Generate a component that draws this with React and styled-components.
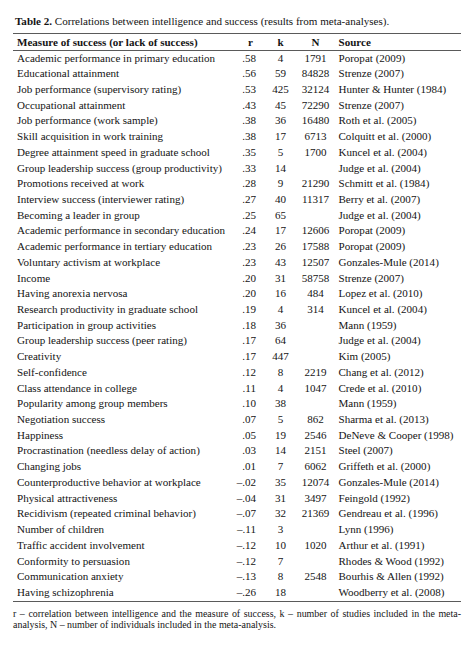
import React from "react";
import styled, { createGlobalStyle } from "styled-components";

const Global = createGlobalStyle`
  html, body { margin: 0; padding: 0; background: #fff; }
  body { font-family: "Liberation Serif", "Times New Roman", serif; color: #141414; }
`;

const rows = [
  ["Academic performance in primary education", ".58", "4", "1791", "Poropat (2009)"],
  ["Educational attainment", ".56", "59", "84828", "Strenze (2007)"],
  ["Job performance (supervisory rating)", ".53", "425", "32124", "Hunter & Hunter (1984)"],
  ["Occupational attainment", ".43", "45", "72290", "Strenze (2007)"],
  ["Job performance (work sample)", ".38", "36", "16480", "Roth et al. (2005)"],
  ["Skill acquisition in work training", ".38", "17", "6713", "Colquitt et al. (2000)"],
  ["Degree attainment speed in graduate school", ".35", "5", "1700", "Kuncel et al. (2004)"],
  ["Group leadership success (group productivity)", ".33", "14", "", "Judge et al. (2004)"],
  ["Promotions received at work", ".28", "9", "21290", "Schmitt et al. (1984)"],
  ["Interview success (interviewer rating)", ".27", "40", "11317", "Berry et al. (2007)"],
  ["Becoming a leader in group", ".25", "65", "", "Judge et al. (2004)"],
  ["Academic performance in secondary education", ".24", "17", "12606", "Poropat (2009)"],
  ["Academic performance in tertiary education", ".23", "26", "17588", "Poropat (2009)"],
  ["Voluntary activism at workplace", ".23", "43", "12507", "Gonzales-Mule (2014)"],
  ["Income", ".20", "31", "58758", "Strenze (2007)"],
  ["Having anorexia nervosa", ".20", "16", "484", "Lopez et al. (2010)"],
  ["Research productivity in graduate school", ".19", "4", "314", "Kuncel et al. (2004)"],
  ["Participation in group activities", ".18", "36", "", "Mann (1959)"],
  ["Group leadership success (peer rating)", ".17", "64", "", "Judge et al. (2004)"],
  ["Creativity", ".17", "447", "", "Kim (2005)"],
  ["Self-confidence", ".12", "8", "2219", "Chang et al. (2012)"],
  ["Class attendance in college", ".11", "4", "1047", "Crede et al. (2010)"],
  ["Popularity among group members", ".10", "38", "", "Mann (1959)"],
  ["Negotiation success", ".07", "5", "862", "Sharma et al. (2013)"],
  ["Happiness", ".05", "19", "2546", "DeNeve & Cooper (1998)"],
  ["Procrastination (needless delay of action)", ".03", "14", "2151", "Steel (2007)"],
  ["Changing jobs", ".01", "7", "6062", "Griffeth et al. (2000)"],
  ["Counterproductive behavior at workplace", "\u2013.02", "35", "12074", "Gonzales-Mule (2014)"],
  ["Physical attractiveness", "\u2013.04", "31", "3497", "Feingold (1992)"],
  ["Recidivism (repeated criminal behavior)", "\u2013.07", "32", "21369", "Gendreau et al. (1996)"],
  ["Number of children", "\u2013.11", "3", "", "Lynn (1996)"],
  ["Traffic accident involvement", "\u2013.12", "10", "1020", "Arthur et al. (1991)"],
  ["Conformity to persuasion", "\u2013.12", "7", "", "Rhodes & Wood (1992)"],
  ["Communication anxiety", "\u2013.13", "8", "2548", "Bourhis & Allen (1992)"],
  ["Having schizophrenia", "\u2013.26", "18", "", "Woodberry et al. (2008)"],
];

const Page = styled.div`
  width: 448px;
  padding: 14px 0 0 13px;
`;

const Caption = styled.div`
  font-size: 11.05px;
  line-height: 14px;
  padding-left: 2px;
  margin-bottom: 5px;
  white-space: nowrap;
  b { font-weight: 700; }
`;

const Table = styled.div`
  border-top: 1.5px solid #5a5a5a;
  border-bottom: 1.5px solid #5a5a5a;
`;

const Row = styled.div`
  display: grid;
  grid-template-columns: 217px 34px 33px 37px 127px;
  height: ${(p) => (p.$head ? "15.5px" : "15.72px")};
  line-height: ${(p) => (p.$head ? "16.5px" : "15.72px")};
  font-size: 11.05px;
  font-weight: ${(p) => (p.$head ? 700 : 400)};
  white-space: nowrap;
  ${(p) => (p.$head ? "border-bottom: 1.5px solid #5a5a5a;" : "")}
`;

const Cell = styled.div`
  text-align: ${(p) => p.$align || "left"};
  padding-left: ${(p) => p.$pl || 0}px;
  padding-right: ${(p) => p.$pr || 0}px;
`;

const Note = styled.p`
  margin: 6.3px 0 0;
  font-size: 9.95px;
  line-height: 11px;
  text-align: justify;
`;

export default function App() {
  return (
    <>
      <Global />
      <Page>
        <Caption>
          <b>Table 2.</b> Correlations between intelligence and success (results from meta-analyses).
        </Caption>
        <Table>
          <Row $head>
            <Cell $pl={4}>Measure of success (or lack of success)</Cell>
            <Cell $align="right" $pr={11}>r</Cell>
            <Cell $align="center">k</Cell>
            <Cell $align="center">N</Cell>
            <Cell $pl={4.5}>Source</Cell>
          </Row>
          {rows.map((r, i) => (
            <Row key={i}>
              <Cell $pl={4}>{r[0]}</Cell>
              <Cell $align="right" $pr={8}>{r[1]}</Cell>
              <Cell $align="center">{r[2]}</Cell>
              <Cell $align="center">{r[3]}</Cell>
              <Cell $pl={4.5}>{r[4]}</Cell>
            </Row>
          ))}
        </Table>
        <Note>
          r – correlation between intelligence and the measure of success, k – number of studies included in the meta-analysis, N – number of individuals included in the meta-analysis.
        </Note>
      </Page>
    </>
  );
}
